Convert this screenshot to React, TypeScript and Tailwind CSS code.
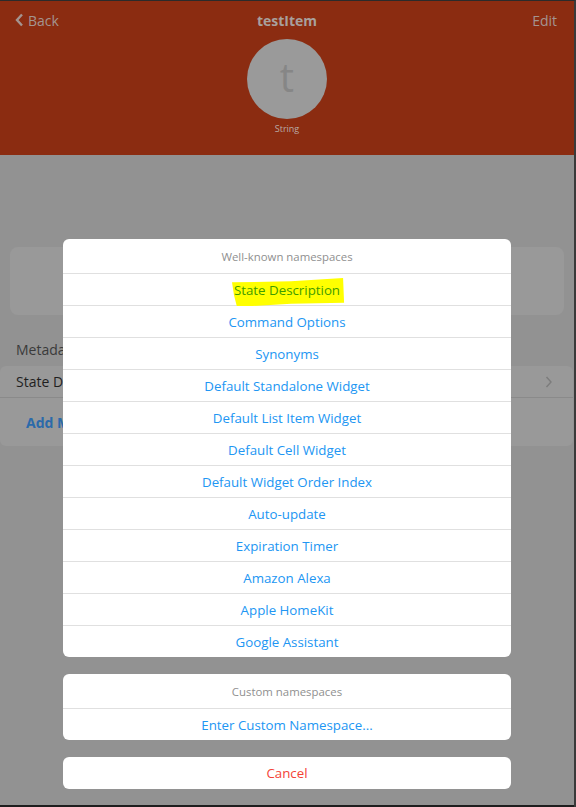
import React from 'react';

const wellKnown = [
  'State Description',
  'Command Options',
  'Synonyms',
  'Default Standalone Widget',
  'Default List Item Widget',
  'Default Cell Widget',
  'Default Widget Order Index',
  'Auto-update',
  'Expiration Timer',
  'Amazon Alexa',
  'Apple HomeKit',
  'Google Assistant',
];

const Highlighted: React.FC<{ label: string }> = ({ label }) => (
  <span className="relative inline-block">
    {/* marker stroke */}
    <svg
      className="absolute left-[-3px] right-[-5px] top-[-4px] bottom-[-6px] w-[calc(100%+8px)] h-[calc(100%+10px)]"
      viewBox="0 0 114 28"
      preserveAspectRatio="none"
    >
      <path d="M1 5 L60 4 L112 1 L113 24 L60 25 L6 28 L3 17 Z" fill="#ffff00" />
    </svg>
    <span className="relative text-[#3f9c00]">{label}</span>
  </span>
);

const App: React.FC = () => {
  return (
    <div className="relative w-full h-[807px] overflow-hidden bg-[#929292] font-['Open_Sans',sans-serif] border-t border-[#2b2b2b] border-r-2 border-r-[#3a3a3a]">
      {/* Header */}
      <div className="h-[154px] bg-[#8b2c11] flex flex-col">
        <div className="flex items-center justify-between h-[38px] px-[15px] text-[14px]">
          <div className="flex items-center gap-[4px] text-[#a49490] w-[80px]">
            <svg width="9" height="14" viewBox="0 0 9 14">
              <path d="M7 1.5 L2 7 L7 12.5" stroke="#a49490" strokeWidth="2.4" fill="none" />
            </svg>
            <span>Back</span>
          </div>
          <span className="font-bold text-[#a8a09d]">testItem</span>
          <span className="w-[80px] text-right text-[#a49490] pr-[2px]">Edit</span>
        </div>
        <div className="flex flex-col items-center">
          <div className="w-[80px] h-[80px] rounded-full bg-[#9a9a9a] flex items-center justify-center">
            <span className="text-[40px] leading-none text-[#868686] pb-[4px]">t</span>
          </div>
          <span className="mt-[3px] text-[9px] text-[#b9aaa5]">String</span>
        </div>
      </div>

      {/* Page content behind the sheet */}
      <div className="px-[10px] pt-[92px]">
        <div className="h-[68px] rounded-lg bg-[#999999]" />
      </div>
      <div className="px-[16px] pt-[24px] pb-[6px] text-[14px] text-[#3a3a3a]">Metadata</div>
      <div className="mr-[1px] rounded-md bg-[#999999] text-[14px]">
        <div className="h-[32px] flex items-center justify-between px-[16px] border-b border-[#8a8a8a]">
          <span className="text-[#1f1f1f]">State Description</span>
          <svg width="8" height="12" viewBox="0 0 8 12" className="mr-[4px]">
            <path d="M1.5 1 L6 6 L1.5 11" stroke="#7c7c7c" strokeWidth="1.4" fill="none" />
          </svg>
        </div>
        <div className="h-[48px] flex items-center px-[26px] font-bold text-[#2b6aaa]">Add Metadata</div>
      </div>

      {/* Action sheet overlay */}
      <div className="absolute inset-0 flex flex-col px-[63px] pt-[238px] gap-[17px] text-center">
        <div className="rounded-md bg-white">
          <div className="h-[34px] flex items-center justify-center pt-[1px] text-[11.4px] text-[#8f8f8f]">
            Well-known namespaces
          </div>
          {wellKnown.map((label, i) => (
            <div
              key={label}
              className="h-[32px] flex items-center justify-center pt-[2px] border-t border-[#e0e0e0] text-[13.3px] text-[#2196f3]"
            >
              {i === 0 ? <Highlighted label={label} /> : label}
            </div>
          ))}
        </div>
        <div className="rounded-md bg-white">
          <div className="h-[34px] flex items-center justify-center pt-[1px] text-[11.4px] text-[#8f8f8f]">
            Custom namespaces
          </div>
          <div className="h-[32px] flex items-center justify-center pt-[2px] border-t border-[#e0e0e0] text-[13.3px] text-[#2196f3]">
            Enter Custom Namespace...
          </div>
        </div>
        <div className="h-[32px] rounded-md bg-white flex items-center justify-center pt-[2px] text-[13.3px] text-[#f44336]">
          Cancel
        </div>
      </div>

      {/* bottom taskbar strip */}
      <div className="absolute left-0 right-0 bottom-0 h-[2px] bg-[#1e1e1e]" />
    </div>
  );
};

export default App;
